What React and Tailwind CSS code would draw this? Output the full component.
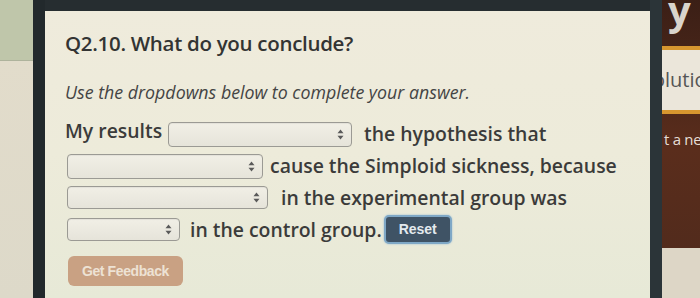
import React from "react";

function Arrows() {
  return (
    <svg width="7" height="11" viewBox="0 0 7 11" className="shrink-0">
      <path d="M3.5 0.5 L6.5 4.2 L0.5 4.2 Z" fill="#5a5a5a" />
      <path d="M3.5 10.5 L6.5 6.8 L0.5 6.8 Z" fill="#5a5a5a" />
    </svg>
  );
}

function Dropdown({ className }) {
  return (
    <div
      className={
        "flex shrink-0 items-center justify-end rounded-[4px] border border-[#9b9a94] bg-gradient-to-b from-[#f1efe6] to-[#e6e4da] pr-[7px] shadow-[inset_0_1px_1px_rgba(0,0,0,0.06)] " +
        className
      }
    >
      <Arrows />
    </div>
  );
}

export default function App() {
  return (
    <div className="flex h-[298px] w-[700px] overflow-hidden bg-[#2a3135] font-['Open_Sans',sans-serif] text-[#3b3b3a]">
      {/* left desktop strip */}
      <div className="flex w-[33px] shrink-0 flex-col">
        <div className="h-[60px] bg-[#bfc6aa]" />
        <div className="h-px bg-[#aeb39c]" />
        <div className="flex-1 bg-gradient-to-b from-[#e2dccb] to-[#ddd9c9]" />
      </div>
      <div className="w-[12px] shrink-0 bg-[#22292c]" />

      {/* modal */}
      <div className="flex w-[605px] shrink-0 flex-col">
        <div className="h-[11px] bg-[#262d30]" />
        <div className="flex-1 bg-gradient-to-b from-[#efebdc] via-[#edebda] to-[#e7e9d7] pl-[20px]">
          <h2 className="mt-[18px] h-[28px] text-[20.5px] font-semibold leading-[28px] tracking-[-0.3px] text-[#333433]">
            Q2.10. What do you conclude?
          </h2>
          <p className="mt-[23px] h-[24px] text-[17.8px] italic leading-[24px] text-[#444]">
            Use the dropdowns below to complete your answer.
          </p>

          <div className="mt-[14px] flex h-[32px] items-center text-[19.4px] font-semibold">
            <span className="-mt-[6px]">My results</span>
            <Dropdown className="ml-[6px] h-[25px] w-[184px]" />
            <span className="ml-[12px]">the hypothesis that</span>
          </div>
          <div className="flex h-[32px] items-center text-[19.4px] font-semibold">
            <Dropdown className="ml-[2px] h-[25px] w-[196px]" />
            <span className="ml-[7px]">cause the Simploid sickness, because</span>
          </div>
          <div className="flex h-[31px] items-center text-[19.4px] font-semibold">
            <Dropdown className="ml-[2px] h-[23px] w-[201px]" />
            <span className="ml-[13px]">in the experimental group was</span>
          </div>
          <div className="flex h-[33px] items-center text-[19.4px] font-semibold">
            <Dropdown className="ml-[2px] h-[23px] w-[113px]" />
            <span className="ml-[10px]">in the control group.</span>
            <button className="ml-[2px] flex h-[29px] w-[68px] items-center justify-center rounded-[5px] border-2 border-[#7fa8c6] bg-[#3f5365] font-['Liberation_Sans',Arial,sans-serif] text-[14px] font-bold text-[#e4eaee] shadow-[0_0_2px_#8fb6d4]">
              Reset
            </button>
          </div>

          <button className="mt-[10px] ml-[3px] flex h-[30px] w-[115px] items-center justify-center rounded-[6px] bg-[#c9a183] font-['Liberation_Sans',Arial,sans-serif] text-[14px] font-bold tracking-[-0.4px] text-[#ede2d4]">
            Get Feedback
          </button>
        </div>
      </div>

      <div className="w-[12px] shrink-0 bg-[#2b3438]" />

      {/* background page on the right */}
      <div className="flex flex-1 flex-col bg-gradient-to-b from-[#3b1f16] via-[#5a2d1c] to-[#4e2a1c]">
        <div className="-mt-[18px] h-[64px] pl-[6px] text-[40px] font-bold leading-[56px] text-[#d9d4cc]">
          y
        </div>
        <div className="overflow-hidden border-y-[4px] border-[#d7962f] bg-[#ebe6da]">
          <div className="-ml-[9px] h-[60px] whitespace-nowrap text-[20px] leading-[60px] text-[#555]">
            olution
          </div>
        </div>
        <div className="mt-[14px] whitespace-nowrap pl-[2px] text-[15px] tracking-[-0.3px] text-[#e6ded6]">
          t a ne
        </div>
        <div className="mt-auto h-[50px] bg-[#ddd6c6]" />
      </div>
    </div>
  );
}
